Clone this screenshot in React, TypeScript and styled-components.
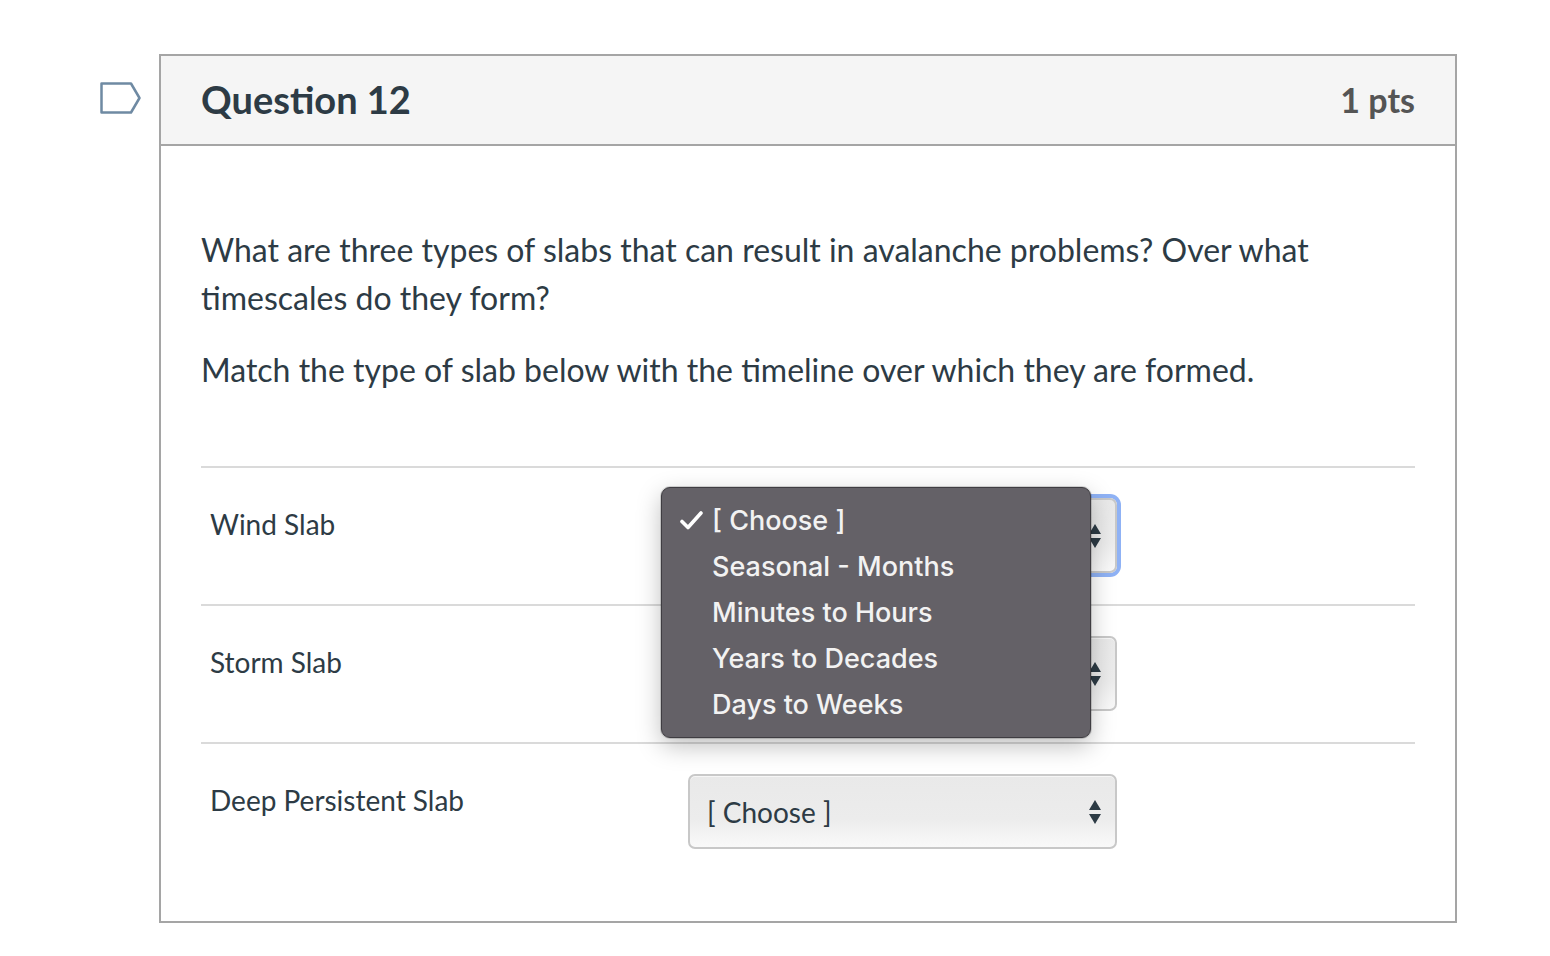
import React from 'react';
import styled, { createGlobalStyle } from 'styled-components';

const GlobalStyle = createGlobalStyle`
  html, body {
    margin: 0;
    padding: 0;
    background: #ffffff;
  }
  body {
    font-family: Lato, "Open Sans", "Liberation Sans", sans-serif;
    color: #2d3b45;
  }
`;

const Page = styled.div`
  display: flex;
  align-items: flex-start;
  gap: 17px;
  padding: 54px 0 0 100px;
  width: 1550px;
  height: 956px;
  box-sizing: border-box;
`;

const Flag = styled.svg`
  flex: none;
  margin-top: 28px;
`;

const Card = styled.section`
  width: 1298px;
  box-sizing: border-box;
  border: 2px solid #a5a5a5;
`;

const Header = styled.header`
  display: flex;
  align-items: center;
  justify-content: space-between;
  height: 88px;
  padding: 0 40px 0 40px;
  background: #f5f5f5;
  border-bottom: 2px solid #a5a5a5;
`;

const Title = styled.h2`
  margin: 0 0 2px 0;
  font-size: 38px;
  font-weight: 700;
  color: #2d3b45;
`;

const Points = styled.div`
  margin-bottom: 2px;
  font-size: 34px;
  font-weight: 700;
  color: #555555;
`;

const Body = styled.div`
  padding: 80px 40px 41px 40px;
`;

const Text = styled.p`
  margin: 0 0 24px 0;
  font-size: 32px;
  line-height: 48px;
  color: #2d3b45;
`;

const Matches = styled.div`
  margin-top: 72px;
  border-top: 2px solid #dadada;
`;

const Row = styled.div<{ $last?: boolean }>`
  display: grid;
  grid-template-columns: 487px 429px;
  height: 136px;
  border-bottom: ${(p) => (p.$last ? 'none' : '2px solid #dadada')};
`;

const Label = styled.div`
  padding: 38px 0 0 9px;
  font-size: 28px;
  line-height: 36px;
  color: #2d3b45;
`;

const SelectWrap = styled.div`
  position: relative;
  padding-top: 30px;
`;

const Select = styled.div<{ $focused?: boolean }>`
  display: flex;
  align-items: center;
  justify-content: space-between;
  height: 75px;
  box-sizing: border-box;
  padding: 0 14px 0 17px;
  border: 2px solid #c8c8c8;
  border-radius: 7px;
  background: linear-gradient(to bottom, #e9e9e9 0%, #ececec 60%, #f9f9f9 100%);
  box-shadow: ${(p) => (p.$focused ? '0 0 0 4px #8fb2f5' : 'inset 0 1px 0 rgba(255,255,255,0.6)')};
  font-size: 28px;
  color: #2d3b45;
`;

const Arrows = styled.svg`
  flex: none;
`;

const Menu = styled.ul`
  position: absolute;
  left: -27px;
  top: 19px;
  width: 430px;
  margin: 0;
  padding: 9px 0 10px 0;
  list-style: none;
  box-sizing: border-box;
  background: #646167;
  border: 1px solid #3f3d42;
  border-radius: 9px;
  box-shadow: 0 8px 24px rgba(0, 0, 0, 0.25), 0 0 0 1px rgba(0, 0, 0, 0.15);
  z-index: 5;
`;

const Option = styled.li`
  display: flex;
  align-items: center;
  height: 46px;
  padding-left: 18px;
  font-family: Inter, "Liberation Sans", sans-serif;
  font-size: 27px;
  font-weight: 500;
  color: #f2f2f2;
`;

const CheckSlot = styled.span`
  display: inline-flex;
  align-items: center;
  width: 32px;
  height: 46px;
`;

const options = ['[ Choose ]', 'Seasonal - Months', 'Minutes to Hours', 'Years to Decades', 'Days to Weeks'];

const rows = ['Wind Slab', 'Storm Slab', 'Deep Persistent Slab'];

const SelectArrows = () => (
  <Arrows width="12" height="26" viewBox="0 0 12 26">
    <path d="M6 1 L12 11 L0 11 Z" fill="#2d3b45" />
    <path d="M0 15 L12 15 L6 25 Z" fill="#2d3b45" />
  </Arrows>
);

const CheckMark = () => (
  <svg width="23" height="19" viewBox="0 0 23 19">
    <path d="M2 10.5 L8 16.5 L21 2" fill="none" stroke="#ffffff" strokeWidth="3.6" strokeLinecap="round" strokeLinejoin="round" />
  </svg>
);

export default function App() {
  return (
    <>
      <GlobalStyle />
      <Page>
        <Flag width="42" height="32" viewBox="0 0 42 32">
          <path d="M1.5 1.5 H31 L39.5 16 L31 30.5 H1.5 Z" fill="none" stroke="#6f8aa3" strokeWidth="2.5" strokeLinejoin="round" />
        </Flag>
        <Card>
          <Header>
            <Title>Question 12</Title>
            <Points>1 pts</Points>
          </Header>
          <Body>
            <Text>
              What are three types of slabs that can result in avalanche problems? Over what timescales do they form?
            </Text>
            <Text>Match the type of slab below with the timeline over which they are formed.</Text>
            <Matches>
              {rows.map((label, i) => (
                <Row key={label} $last={i === rows.length - 1}>
                  <Label>{label}</Label>
                  <SelectWrap>
                    <Select $focused={i === 0}>
                      <span>[ Choose ]</span>
                      <SelectArrows />
                    </Select>
                    {i === 0 && (
                      <Menu>
                        {options.map((opt, j) => (
                          <Option key={opt}>
                            <CheckSlot>{j === 0 && <CheckMark />}</CheckSlot>
                            {opt}
                          </Option>
                        ))}
                      </Menu>
                    )}
                  </SelectWrap>
                </Row>
              ))}
            </Matches>
          </Body>
        </Card>
      </Page>
    </>
  );
}
